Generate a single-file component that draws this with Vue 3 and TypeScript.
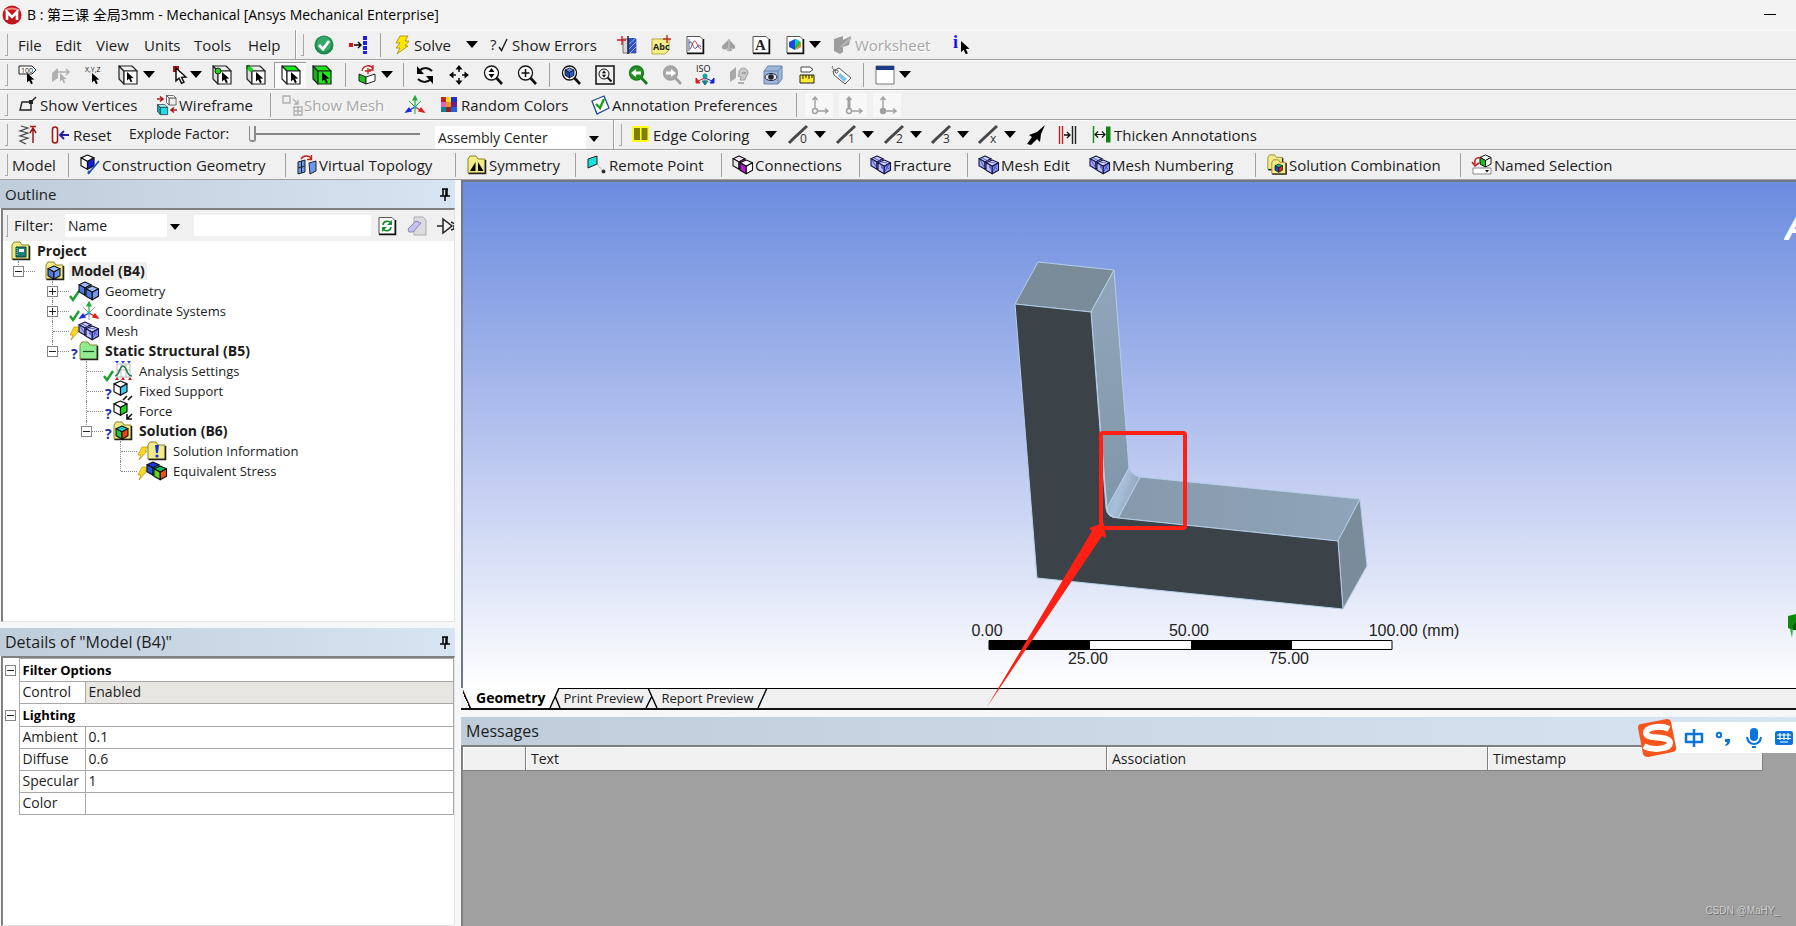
<script setup lang="ts">
import { ref } from 'vue'

interface Item {
  kind?: 'grip' | 'sep' | 'edge' | 'drop' | 'label' | 'slider' | 'select'
  icon?: string
  text?: string
  name?: string
  w: number
  off?: boolean
  on?: boolean
  tile?: boolean
}

interface Node {
  depth: number
  text: string
  icon: string
  bold?: boolean
  box?: '+' | '-'
  status?: 'ok' | 'bolt' | 'ask'
  last?: boolean
  selected?: boolean
}

const grip = (w = 13): Item => ({ kind: 'grip', w })
const sep = (w = 12): Item => ({ kind: 'sep', w })
const drop = (name: string, w = 22): Item => ({ kind: 'drop', name, w })

const sans = 'font-family="Open Sans, sans-serif"'
const box = (f: string, t: string, s: string, c = '#222') =>
  `<g stroke="${c}" stroke-width="1.2" stroke-linejoin="round"><path fill="${s}" d="M1 1v13l5 5V6z"/><path fill="${t}" d="M1 1h13l5 5H6z"/><path fill="${f}" d="M6 6h13v13H6z"/></g>`
const hex = (x: number, y: number, k: number, t: string, l: string, r: string, c = '#111') =>
  `<g transform="translate(${x} ${y}) scale(${k})" stroke="${c}" stroke-width=".9" stroke-linejoin="round"><path fill="${t}" d="M5 0l5 2.2L5 5 0 2.2z"/><path fill="${l}" d="M0 2.2L5 5v6L0 8.2z"/><path fill="${r}" d="M10 2.2L5 5v6l5-2.8z"/></g>`
const cursor = (x: number, y: number, k = 1, f = '#000', s = 'none') =>
  `<path transform="translate(${x} ${y}) scale(${k})" fill="${f}" stroke="${s}" d="M0 0v8.6l2-1.8 1.7 3.4 1.6-.8L3.7 6.2l2.9-.2z"/>`
const folder = (f = '#f3eb86') =>
  `<path d="M1 4l2-3h6l2 3h7v14H1z" fill="${f}" stroke="#8c8430"/><path d="M1.5 18.5h17V5" fill="none" stroke="#222" stroke-width="1.6"/>`
const lens = (inner: string, c = '#111', f = '#fff') =>
  `<circle cx="8.5" cy="8" r="7" fill="${f}" stroke="${c}" stroke-width="1.3"/><path d="M13.5 13l5.5 6" stroke="${c}" stroke-width="2.6"/>${inner}`
const axes = (a: string) =>
  `<g stroke="#a0a0a0" fill="none" stroke-width="1.4"><path d="M6 15V2M3.500 5L6 2l2.500 3M7 16h12M16 13.500l3 2.500-3 2.500"/>${a}</g>`
const mesh =
  hex(0, 1, 1.2, '#c8ccff', '#a4aaf8', '#b4baff', '#14143c') +
  hex(7, 5, 1.25, '#d4d8ff', '#b9bdfa', '#8c94f4', '#14143c') +
  '<path d="M1 5l5 8M3 3l6 3M9 8l4 8M14 11l4 3M10 13l3-2M14 16l4-7M10 7l6 1" stroke="#3c44b8" stroke-width=".8"/>'
const edgeLine = (n: string) =>
  `<path d="M1 18l4-4L19 1" stroke="#484848" stroke-width="3" fill="none"/><text x="12" y="18" font-size="12" fill="#333" ${sans}>${n}</text>`
const triad = (k: string) =>
  `<path d="M10 12V2M8 5l2-4 2 4z" stroke="#18b030" fill="#18b030" stroke-width="1.2"/><path d="M10 12l-7 4M1 17l3-4 2 3z" stroke="#1a2ae0" fill="#1a2ae0" stroke-width="1.3"/><path d="M10 12l7 4M19 17l-5-1 2-3z" stroke="#e02020" fill="#e02020" stroke-width="1.3"/><path d="M4 6l5 5M16 6l-5 5M10 13v6" stroke="${k}"/><circle cx="10" cy="12" r="1.5" fill="#18a8c0"/>`
const page = (f = '#fff') =>
  `<path d="M2 1.500h13l3 3V18H2z" fill="${f}" stroke="#555"/><path d="M2 18.500h16.500V4" fill="none" stroke="#111" stroke-width="1.5"/>`

const icons: Record<string, string> = {
  app: '<circle cx="10" cy="10" r="9.5" fill="#c4141c"/><path d="M3 6a9 7 0 0 1 14 0" fill="none" stroke="#ef8a8a" stroke-width="2"/><path d="M5 15V7l5 5 5-5v8" fill="none" stroke="#fff" stroke-width="2.6"/>',
  check: '<circle cx="10" cy="10" r="9.5" fill="#1d8a4c"/><circle cx="10" cy="9" r="7.5" fill="#36a866"/><path d="M5 10l4 4 6-8" fill="none" stroke="#fff" stroke-width="2.8"/>',
  dots: '<path d="M1 8h4v4H1z" fill="#e01010"/><path d="M6 10h7M10 7l3 3-3 3" stroke="#000" fill="none" stroke-width="1.4"/><path d="M15 1h4v4h-4zM15 6h4v4h-4zM15 11h4v4h-4zM15 16h4v3h-4z" fill="#1a20e8"/>',
  bolt: '<path d="M8 1h8l-3 5h4l-4 5h3L5 19l3-6H4l4-5H4z" fill="#ffe600" stroke="#a08c10" stroke-width=".8"/>',
  errors: `<text x="0" y="15" font-size="15" fill="#222" ${sans}>?</text><path d="M9 12l2.500 3.500L17 4" fill="none" stroke="#222" stroke-width="1.5"/>`,
  section: '<path d="M6 4h13v14H6z" fill="#d7d7df" stroke="#777"/><path d="M11 3h8v15h-8z" fill="#2b50c8"/><path d="M11 10l8-7M11 15l8-8M13 18l6-6" stroke="#9db3f5"/><path d="M11 1v18" stroke="#222" stroke-width="1.5"/><path d="M5 1v9M0 5h9" stroke="#d01818" stroke-width="1.4"/>',
  abc: `<path d="M1 4h17v11l-4 4H1z" fill="#f6ee86" stroke="#b5aa40"/><text x="2" y="15" font-size="9" font-weight="700" fill="#222" ${sans}>Abc</text><path d="M16 0v8M12 4h8" stroke="#c03020" stroke-width="1.4"/>`,
  chart: page() + '<path d="M4 4v12M4 8c3-5 4 8 7 5s2-5 5-1" stroke="#3a50b0" fill="none"/><path d="M5 14c2-2 3-9 5-8s2 6 6 8" stroke="#c02828" fill="none"/>',
  spade: '<path d="M10 4l6 7c1 3-2 4-4 2l1 3H8l1-3c-3 3-7 1-6-2z" fill="#a0a0a0"/><path d="M10 4v13" stroke="#c8c8c8"/>',
  letter: page() + '<text x="4" y="15" font-size="15" font-weight="bold" fill="#222" font-family="Liberation Serif, serif">A</text>',
  figure: page() + '<path d="M4 7l6-3v11l-6-3z" fill="#1848e0"/><path d="M10 4l6 3-2 4-4 4z" fill="#20c040"/><path d="M10 4l4 1-4 6z" fill="#10c8e0"/><path d="M16 7v5l-5 3z" fill="#f08010"/>',
  worksheet: '<path d="M1 4l9-3v4l8-4-2 9-6 2v5l-3 2-6-3z" fill="#9c9c9c"/><path d="M8 12l10-9" stroke="#b8b8b8" stroke-width="2"/>',
  info: '<text x="0" y="13" font-size="18" font-weight="bold" fill="#1414e8" font-family="Liberation Serif, serif">i</text>' + cursor(8, 6, 1.3),
  probe: `<path d="M1 1h13l4 4-4 4H1z" fill="#fff" stroke="#222"/><text x="3" y="8" font-size="7" fill="#111" ${sans}>100</text>` + cursor(9, 8, 1.1),
  plane: '<path d="M1 8l6-5v10l-6 4z" fill="#b0b0b0"/><path d="M7 7h11M15 4l3 3-3 3" stroke="#b0b0b0" fill="none" stroke-width="1.5"/>' + cursor(9, 8, 1, '#b0b0b0'),
  xyz: `<text x="1" y="7" font-size="7" fill="#111" ${sans}>X,Y,Z</text>` + cursor(8, 8, 1.1),
  pick: box('#fff', '#eee', '#ddd') + cursor(9, 7),
  vertex: box('#fff', '#eee', '#ddd') + '<circle cx="6" cy="6" r="3" fill="#18d818" stroke="#222"/>' + cursor(10, 7, 1.1),
  edge: box('#fff', '#eee', '#ddd') + '<path d="M1 1l5 5" stroke="#18d818" stroke-width="4"/><path d="M1 4V1h3" stroke="#222" fill="none"/>' + cursor(10, 7, 1.1),
  face: box('#fff', '#18e818', '#fff') + cursor(10, 7, 1.1),
  body: box('#18e818', '#18e818', '#10b410') + cursor(10, 7, 1.1),
  redpick: '<path d="M1 1h6v6H1z" fill="#b01010"/>' + cursor(4, 3, 1.5, '#fff', '#111'),
  rotbox: '<path d="M2 9l7 3v7l-7-3z" fill="#18c018" stroke="#222"/><path d="M9 12l9-3v7l-9 3z" fill="#fff" stroke="#222"/><path d="M5 6c1-6 9-7 11-2M16 0v5h-4M8 6h6M11 3v6" stroke="#c02020" fill="none" stroke-width="1.3"/>',
  rotate: '<path d="M4 6c4-4 9-4 13 0M16 14c-4 4-9 4-13 0" fill="none" stroke="#111" stroke-width="2.2"/><path d="M2 1v8h7zM18 19v-8h-7z"/>',
  pan: '<path d="M10 2v5M10 13v5M2 10h5M13 10h5" stroke="#111" stroke-width="1.5"/><path d="M10 0l3.500 4.500h-7zM10 20l3.500-4.500h-7zM0 10l4.500-3.500v7zM20 10l-4.500-3.500v7z"/>',
  zoom: lens('<path d="M8.500 3l3 4h-6zM8.500 13l3-4h-6z"/>'),
  zoomin: lens('<path d="M8.500 4v8M4.500 8h8" stroke="#111" stroke-width="1.5"/>'),
  zoomfit: lens(hex(4, 3, 0.9, '#5a90f0', '#1848b0', '#2a5cd0')),
  zoombox: '<path d="M1 1h18v18H1z" fill="none" stroke="#111" stroke-width="1.5"/><circle cx="9" cy="9" r="5" fill="none" stroke="#111"/><path d="M12.500 12.500l4 4" stroke="#111" stroke-width="2"/><path d="M9 5.500l2 2.800H7zM9 12.500l2-2.800H7z"/>',
  prev: lens('<path d="M3 8l5-4v2.500h5v3H8V12z" fill="#fff"/>', '#187818', '#249024'),
  next: lens('<path d="M14 8L9 4v2.500H4v3h5V12z" fill="#fff"/>', '#a0a0a0', '#a8a8a8'),
  iso: `<text x="1" y="7" font-size="9" fill="#111" ${sans}>ISO</text><path d="M10 12v6M10 20l-3-4h6z" fill="#188088" stroke="#188088"/><path d="M10 13l-7 3M1 13v5h4z" fill="#d02020" stroke="#d02020"/><path d="M10 13l7 3M19 13v5h-4z" fill="#1820d0" stroke="#1820d0"/><circle cx="10" cy="11" r="2.5" fill="#18a8a0"/>`,
  look: '<path d="M1 7l6-5v11l-6 4z" fill="#a8a8a8"/><path d="M10 6c2-4 8-4 9 1 0 4-3 5-3 8h-5l1-3-3-1 1-2z" fill="#c8c8c8" stroke="#a0a0a0"/><path d="M13 8h4M9 18h6" stroke="#999" stroke-width="1.5"/>',
  eye: '<path d="M1 6l4-5h14v13l-4 5H1z" fill="#9cb8dc" stroke="#6884a8"/><path d="M1 6h14v13M15 6l4-5" fill="none" stroke="#6884a8"/><ellipse cx="8" cy="12" rx="6" ry="3.5" fill="#e4ecf6" stroke="#223"/><circle cx="8" cy="12" r="2.8" fill="#223"/>',
  ruler: '<path d="M4 2h9l3 2.500L13 7H4z" fill="#fff" stroke="#444"/><path d="M3 10h14v8H3z" fill="#ffe930" stroke="#222"/><path d="M6 10v4M9 10v3M12 10v4M15 10v3" stroke="#222"/>',
  tag: '<path d="M2 6l6-3 12 10-6 6L3 10z" fill="#fff" stroke="#555"/><path d="M9 8l7 6-3 3-6-6z" fill="#7cc0f0"/><circle cx="5.5" cy="6.5" r="1.6" fill="#eee" stroke="#555"/><path d="M5 6C2 4 0 3 2 1" fill="none" stroke="#555"/>',
  window: '<path d="M1 1h18v18H1z" fill="#fff" stroke="#777"/><path d="M1 1h18v4H1z" fill="#1c3c88"/>',
  vertices: '<path d="M4 7h9v8H2z" fill="none" stroke="#222" stroke-width="1.4"/><path d="M13 7l5-5" stroke="#222" stroke-width="1.4"/><path d="M11 5h4v4h-4z" fill="#222"/>',
  wire: '<g transform="translate(9 0) scale(.53)">' + box('#eee', '#fff', '#fff') + '</g><g transform="translate(0 9) scale(.56)">' + box('#18e0e8', '#a0f4f8', '#10b0b8') + '</g><path d="M0 4h5M3 1.500L6 4 3 6.500M20 15h-5M17 12.500L14 15l3 2.500" stroke="#b01818" fill="none" stroke-width="1.6"/>',
  showmesh: '<path d="M1 1h7v7H1zM12 12h8v8h-8zM16 12v8M12 16h8M11 4l5 5M16 5v4h-4" stroke="#b0b0b0" fill="none" stroke-width="1.4"/>',
  triad: triad('#18b030'),
  random: '<path d="M2 2h5v5H2z" fill="#c02020"/><path d="M7 2h5v5H7z" fill="#f8e020"/><path d="M12 2h6v5h-6z" fill="#2030d0"/><path d="M2 7h5v5H2z" fill="#e060c0"/><path d="M7 7h5v5H7z" fill="#f09020"/><path d="M12 7h6v5h-6z" fill="#702080"/><path d="M2 12h5v5H2z" fill="#108090"/><path d="M7 12h5v5H7z" fill="#902020"/><path d="M12 12h6v5h-6z" fill="#2060e0"/>',
  prefs: '<path d="M2 6l12-5 5 12-12 6z" fill="#fff" stroke="#234a90" stroke-width="1.3"/><path d="M6 9l4 4 4-9" fill="none" stroke="#18a018" stroke-width="2.4"/>',
  axisA: axes('<circle cx="6" cy="16" r="2.5" fill="#f4f4f4"/>'),
  axisB: axes('<path d="M6 15V4" stroke-width="3"/><circle cx="6" cy="16" r="2.5" fill="#f4f4f4"/>'),
  axisC: axes('<circle cx="6" cy="16" r="2.5" fill="#a0a0a0"/>'),
  spring: '<path d="M3 1l7 2-8 3 8 2-8 3 8 2-8 3 6 3" fill="none" stroke="#444" stroke-width="1.2"/><path d="M15 18V4M12 8l3-5 3 5M12 1.500h6" fill="none" stroke="#a01818" stroke-width="1.5"/>',
  reset: '<rect x="1.5" y="2" width="5" height="16" rx="2.5" fill="#fff" stroke="#a01818" stroke-width="1.6"/><path d="M18 10H9M13 6l-4 4 4 4" fill="none" stroke="#2020a0" stroke-width="1.8"/>',
  coloring: '<path d="M1 1h17v16H1z" fill="#ffff20"/><path d="M3 3h6v12H3zM10.500 3h6v12h-6z" fill="#808000"/>',
  e0: edgeLine('0'),
  e1: edgeLine('1'),
  e2: edgeLine('2'),
  e3: edgeLine('3'),
  ex: edgeLine('x'),
  pin: '<path d="M1 19l5-7-3-2 8-3 8-7-4 9-1 8-3-3-6 6z"/>',
  gap: '<path d="M1.500 1v18M4.500 1v18" stroke="#c02020" stroke-width="1.4"/><path d="M6 10h6M9 7l3 3-3 3" fill="none" stroke="#111" stroke-width="1.3"/><path d="M14.500 1v18M17.500 1v18" stroke="#222" stroke-width="1.4"/>',
  thick: '<path d="M1.500 1v17" stroke="#189018" stroke-width="1.5"/><path d="M3 9.500h10M6 6.500l-3 3 3 3M10 6.500l3 3-3 3" fill="none" stroke="#111" stroke-width="1.2"/><path d="M14 1.500h4.500v16H14z" fill="#108010"/>',
  construct: hex(1, 0, 1.3, '#fff', '#fff', '#1020e0') + '<path d="M8 19L19 6" stroke="#1a50c0" stroke-width="1.8"/><circle cx="9" cy="17" r="1.5" fill="#1a50c0"/>',
  topo: '<path d="M1 7l7-2v12l-7 2zM12 8l7-2v10l-6 3z" fill="#6c98f0" stroke="#222"/><path d="M4.500 6v12M1 13l7-2" stroke="#222"/><path d="M4 4c2-4 9-4 10 0M14.500 0v4.500H10" fill="none" stroke="#c02020" stroke-width="1.4"/>',
  symmetry: folder() + '<path d="M8.500 7v9H3zM11 7v9h5.500z"/>',
  remote: '<path d="M1 4l9-3v8l-9 4z" fill="#18e0e0" stroke="#222"/><path d="M10 9l5 6" stroke="#777" stroke-dasharray="1 1"/><circle cx="16.5" cy="16.5" r="2" fill="#333"/>',
  connect: hex(0, 1, 1.2, '#f4e4f8', '#e8e8e8', '#c830d8') + hex(7, 5, 1.25, '#fff', '#b020c8', '#fff'),
  mesh,
  combo: '<g transform="translate(0 -1) scale(.85)">' + folder() + '</g><g transform="translate(4 4) scale(.82)">' + folder() + '</g>' + hex(8, 9, 0.75, '#18c080', '#2040d0', '#d03020'),
  named: hex(8, 0, 1.1, '#fff', '#18c018', '#fff') + '<path d="M8 3C4 2 2 5 3 9M0 7l3 4 4-3" fill="none" stroke="#c02020" stroke-width="1.6"/><path d="M1 13h18v6H1z" fill="#fff" stroke="#888"/><path d="M13 15h4l-2 2.500z"/>',
  project: folder() + '<path d="M5 6h10v10H5z" fill="#188078" stroke="#0c4038"/><path d="M8 8h5v3H8z" fill="#fff"/><path d="M6 7v8" stroke="#8fd8d0" stroke-dasharray="1 1"/>',
  model: folder() + hex(3, 5, 1.2, '#a0bcff', '#5078e0', '#6890f0'),
  geometry: hex(0, 1, 1.2, '#a0bcff', '#5078e0', '#7098f4') + hex(7, 5, 1.25, '#a0bcff', '#5078e0', '#7098f4'),
  coords: triad('#999'),
  static: folder('#90ec90') + '<path d="M4 10.500h11" stroke="#205020" stroke-width="1.2"/>',
  analysis: '<path d="M4 3h13v13H4zM4 9h13M8 3v13M13 3v13" fill="none" stroke="#b8b8b8"/><path d="M2 15c5 0 4-10 8-10s3 10 9 10" fill="none" stroke="#207850" stroke-width="1.6"/><path d="M2 0h4L4 2.500zM8 0h4l-2 2.500zM14 0h4l-2 2.500z" fill="#1838d0"/><path d="M2 19l2-3 2 3zM8 19l2-3 2 3zM15 19l2-3 2 3z" fill="#c01818"/>',
  support: hex(1, 0, 1.3, '#fff', '#fff', '#40c8f0') + '<path d="M10 19l4-4M15 19l4-4" stroke="#111" stroke-width="1.6"/>',
  force: hex(1, 0, 1.3, '#fff', '#fff', '#18d818') + '<path d="M19 13l-4 4M14 13v5h5" fill="none" stroke="#111" stroke-width="1.6"/>',
  solution: folder() + hex(3, 5, 1.2, '#20c8c8', '#20c040', '#f04018'),
  solinfo: folder() + '<path d="M8 4h4l-1 8H9z" fill="#1030d8"/><circle cx="10" cy="15" r="1.6" fill="#1030d8"/>',
  stress: hex(0, 1, 1.2, '#1838d8', '#2050e8', '#18c0e0') + hex(7, 5, 1.25, '#18b858', '#60d820', '#f05018'),
  refresh: page() + '<path d="M6 9c0-4 6-5 8-2M14 11c0 4-6 5-8 2" fill="none" stroke="#189030" stroke-width="1.6"/><path d="M15 4v5h-5zM5 16v-5h5z" fill="#189030"/>',
  clear: '<path d="M7 1h9l3 3v15H7z" fill="#dcdce0" stroke="#aaa"/><path d="M1 13L9 5l5 2-8 9H2z" fill="#c4c0f0" stroke="#8884b8"/>',
  expand: '<path d="M0 10h6M6 3v14l9-7zM14 6l6 3M14 14l6-2M17 9v4" fill="none" stroke="#222" stroke-width="1.5"/>',
}

const status: Record<string, string> = {
  ok: '<path d="M1 15l3 4 6-9" fill="none" stroke="#18a028" stroke-width="2.4"/>',
  bolt: '<path d="M5 6h6l-3 4h2l-8 9 2-5H1z" fill="#ffd820" stroke="#b09018" stroke-width=".7"/>',
  ask: `<text x="2" y="18" font-size="14" font-weight="bold" fill="#1830a8" ${sans}>?</text>`,
}

const bars: Item[][] = [
  [
    grip(),
    { text: 'File', w: 37 },
    { text: 'Edit', w: 41 },
    { text: 'View', w: 48 },
    { text: 'Units', w: 50 },
    { text: 'Tools', w: 54 },
    { text: 'Help', w: 47 },
    { kind: 'edge', w: 6 },
    grip(),
    { icon: 'check', name: 'Status', w: 34 },
    { icon: 'dots', name: 'Dependencies', w: 32 },
    sep(),
    { icon: 'bolt', text: 'Solve', w: 74 },
    drop('Solve options', 24),
    { icon: 'errors', text: 'Show Errors', w: 127 },
    { icon: 'section', name: 'Section plane', w: 34 },
    { icon: 'abc', name: 'Annotation', w: 34 },
    { icon: 'chart', name: 'Chart', w: 34 },
    { icon: 'spade', name: 'Comment', w: 32, off: true },
    { icon: 'letter', name: 'Text', w: 34 },
    { icon: 'figure', name: 'Figure', w: 24 },
    drop('Figure options', 24),
    { icon: 'worksheet', text: 'Worksheet', w: 120, off: true },
    { icon: 'info', name: 'Selection information', w: 24 },
  ],
  [
    grip(),
    { icon: 'probe', name: 'Probe', w: 33 },
    { icon: 'plane', name: 'Direction', w: 33, off: true },
    { icon: 'xyz', name: 'Coordinates', w: 34 },
    { icon: 'pick', name: 'Select type', w: 25 },
    drop('Select type options', 29),
    { icon: 'redpick', name: 'Select mode', w: 18 },
    drop('Select mode options'),
    { icon: 'vertex', name: 'Vertex', w: 34 },
    { icon: 'edge', name: 'Edge', w: 28 },
    { icon: 'face', name: 'Face', w: 38, on: true },
    { icon: 'body', name: 'Body', w: 33 },
    sep(),
    { icon: 'rotbox', name: 'Extend', w: 24 },
    drop('Extend options'),
    sep(),
    { icon: 'rotate', name: 'Rotate', w: 34 },
    { icon: 'pan', name: 'Pan', w: 34 },
    { icon: 'zoom', name: 'Zoom', w: 34 },
    { icon: 'zoomin', name: 'Box zoom', w: 32 },
    sep(),
    { icon: 'zoomfit', name: 'Zoom to fit', w: 34 },
    { icon: 'zoombox', name: 'Magnifier', w: 33 },
    { icon: 'prev', name: 'Previous view', w: 34 },
    { icon: 'next', name: 'Next view', w: 33, off: true },
    { icon: 'iso', name: 'Isometric view', w: 34 },
    { icon: 'look', name: 'Look at', w: 34, off: true },
    { icon: 'eye', name: 'Manage views', w: 34 },
    { icon: 'ruler', name: 'Rescale', w: 34 },
    { icon: 'tag', name: 'Tags', w: 32 },
    sep(),
    { icon: 'window', name: 'Viewports', w: 24 },
    drop('Viewport options'),
  ],
  [
    grip(),
    { icon: 'vertices', text: 'Show Vertices', w: 139 },
    { icon: 'wire', text: 'Wireframe', w: 113 },
    sep(),
    { icon: 'showmesh', text: 'Show Mesh', w: 123, off: true },
    { icon: 'triad', name: 'Coordinate systems', w: 34 },
    { icon: 'random', text: 'Random Colors', w: 151 },
    { icon: 'prefs', text: 'Annotation Preferences', w: 206 },
    sep(9),
    { icon: 'axisA', name: 'Axis start', w: 34, tile: true, off: true },
    { icon: 'axisB', name: 'Axis middle', w: 34, tile: true, off: true },
    { icon: 'axisC', name: 'Axis end', w: 34, tile: true, off: true },
  ],
  [
    grip(),
    { icon: 'spring', name: 'Explode', w: 33 },
    { icon: 'reset', text: 'Reset', w: 78 },
    { kind: 'label', text: 'Explode Factor:', w: 120 },
    { kind: 'slider', name: 'Explode Factor', w: 186 },
    { kind: 'select', name: 'Assembly center', w: 178 },
    { kind: 'edge', w: 6 },
    grip(12),
    { icon: 'coloring', text: 'Edge Coloring', w: 134 },
    drop('Edge coloring options', 23),
    { icon: 'e0', name: 'Free edges', w: 26 },
    drop('Free edge options'),
    { icon: 'e1', name: 'Single edges', w: 26 },
    drop('Single edge options'),
    { icon: 'e2', name: 'Double edges', w: 26 },
    drop('Double edge options', 21),
    { icon: 'e3', name: 'Triple edges', w: 26 },
    drop('Triple edge options', 21),
    { icon: 'ex', name: 'Multiple edges', w: 26 },
    drop('Multiple edge options'),
    { icon: 'pin', name: 'Edge direction', w: 32 },
    { icon: 'gap', name: 'Mesh connection', w: 34 },
    { icon: 'thick', text: 'Thicken Annotations', w: 180 },
  ],
  [
    grip(7),
    { text: 'Model', w: 56 },
    sep(),
    { icon: 'construct', text: 'Construction Geometry', w: 205 },
    sep(),
    { icon: 'topo', text: 'Virtual Topology', w: 158 },
    sep(),
    { icon: 'symmetry', text: 'Symmetry', w: 108 },
    sep(),
    { icon: 'remote', text: 'Remote Point', w: 134 },
    sep(),
    { icon: 'connect', text: 'Connections', w: 126 },
    sep(),
    { icon: 'mesh', text: 'Fracture', w: 96 },
    sep(),
    { icon: 'mesh', text: 'Mesh Edit', w: 111 },
    { icon: 'mesh', text: 'Mesh Numbering', w: 165 },
    sep(),
    { icon: 'combo', text: 'Solution Combination', w: 193 },
    sep(),
    { icon: 'named', text: 'Named Selection', w: 160 },
  ],
]

const nodes: Node[] = [
  { depth: 0, text: 'Project', icon: 'project', bold: true },
  { depth: 1, text: 'Model (B4)', icon: 'model', bold: true, box: '-', last: true, selected: true },
  { depth: 2, text: 'Geometry', icon: 'geometry', box: '+', status: 'ok' },
  { depth: 2, text: 'Coordinate Systems', icon: 'coords', box: '+', status: 'ok' },
  { depth: 2, text: 'Mesh', icon: 'mesh', status: 'bolt' },
  { depth: 2, text: 'Static Structural (B5)', icon: 'static', bold: true, box: '-', status: 'ask', last: true },
  { depth: 3, text: 'Analysis Settings', icon: 'analysis', status: 'ok' },
  { depth: 3, text: 'Fixed Support', icon: 'support', status: 'ask' },
  { depth: 3, text: 'Force', icon: 'force', status: 'ask' },
  { depth: 3, text: 'Solution (B6)', icon: 'solution', bold: true, box: '-', status: 'ask', last: true },
  { depth: 4, text: 'Solution Information', icon: 'solinfo', status: 'bolt' },
  { depth: 4, text: 'Equivalent Stress', icon: 'stress', status: 'bolt', last: true },
]

const details = [
  { title: 'Filter Options', rows: [{ k: 'Control', v: 'Enabled', locked: true }] },
  {
    title: 'Lighting',
    rows: [
      { k: 'Ambient', v: '0.1', locked: false },
      { k: 'Diffuse', v: '0.6', locked: false },
      { k: 'Specular', v: '1', locked: false },
      { k: 'Color', v: '', locked: false },
    ],
  },
]

const explode = ref(0)
const center = ref('Assembly Center')
const filterBy = ref('Name')
const filterText = ref('')
</script>

<template>
  <div class="app">
    <header class="title">
      <svg class="icon" viewBox="0 0 20 20" v-html="icons.app"></svg>
      <h1>B : 第三课 全局3mm - Mechanical [Ansys Mechanical Enterprise]</h1>
      <button class="minimize" aria-label="Minimize"></button>
    </header>

    <nav v-for="(bar, b) in bars" :key="b" class="bar">
      <div
        v-for="(it, i) in bar"
        :key="i"
        class="slot"
        :class="it.kind"
        :style="{ width: it.w + 'px' }"
      >
        <button v-if="it.kind === 'drop'" class="tool arrow" :aria-label="it.name">
          <svg width="12" height="7" viewBox="0 0 12 7"><path d="M0 0h12L6 7z" /></svg>
        </button>
        <label v-else-if="it.kind === 'label'" for="explode">{{ it.text }}</label>
        <input
          v-else-if="it.kind === 'slider'"
          id="explode"
          v-model="explode"
          type="range"
          min="0"
          max="10"
        />
        <div v-else-if="it.kind === 'select'" class="combo">
          <select v-model="center" :aria-label="it.name">
            <option>Assembly Center</option>
          </select>
          <svg width="10" height="6" viewBox="0 0 12 7"><path d="M0 0h12L6 7z" /></svg>
        </div>
        <button
          v-else-if="!it.kind"
          class="tool"
          :class="{ on: it.on, tile: it.tile }"
          :disabled="it.off"
          :aria-label="it.name"
        >
          <svg v-if="it.icon" class="icon" viewBox="0 0 20 20" v-html="icons[it.icon]"></svg>
          <span v-if="it.text">{{ it.text }}</span>
        </button>
      </div>
    </nav>

    <main>
      <aside>
        <section class="panel outline">
          <header class="caption">
            <h2>Outline</h2>
            <button class="tack" aria-label="Pin outline">
              <svg width="10" height="13" viewBox="0 0 10 13">
                <path d="M2 1h6M3 1v7M7 1v7M6 1v7M0 8h10M5 8v5" fill="none" stroke="#000" stroke-width="1.5" />
              </svg>
            </button>
          </header>
          <div class="body">
            <div class="filter">
              <label for="by">Filter:</label>
              <div class="combo">
                <select id="by" v-model="filterBy">
                  <option>Name</option>
                </select>
                <svg width="10" height="6" viewBox="0 0 12 7"><path d="M0 0h12L6 7z" /></svg>
              </div>
              <input v-model="filterText" type="text" aria-label="Filter text" />
              <button class="tool" aria-label="Refresh">
                <svg class="icon" viewBox="0 0 20 20" v-html="icons.refresh"></svg>
              </button>
              <button class="tool" aria-label="Clear">
                <svg class="icon" viewBox="0 0 20 20" v-html="icons.clear"></svg>
              </button>
              <button class="tool cut" aria-label="Expand">
                <svg class="icon" viewBox="0 0 20 20" v-html="icons.expand"></svg>
              </button>
            </div>
            <ul class="tree">
              <li v-for="n in nodes" :key="n.text">
                <span
                  v-for="d in n.depth"
                  :key="d"
                  class="guide"
                  :class="{ line: d === n.depth, last: n.last }"
                >
                  <button
                    v-if="d === n.depth && n.box"
                    class="expander"
                    :class="{ plus: n.box === '+' }"
                    :aria-label="n.text"
                  ></button>
                </span>
                <svg class="status" viewBox="0 0 10 20" v-html="n.status ? status[n.status] : ''"></svg>
                <svg class="icon" viewBox="0 0 20 20" v-html="icons[n.icon]"></svg>
                <span class="name" :class="{ bold: n.bold, selected: n.selected }">{{ n.text }}</span>
              </li>
            </ul>
          </div>
        </section>

        <section class="panel details">
          <header class="caption">
            <h2>Details of "Model (B4)"</h2>
            <button class="tack" aria-label="Pin details">
              <svg width="10" height="13" viewBox="0 0 10 13">
                <path d="M2 1h6M3 1v7M7 1v7M6 1v7M0 8h10M5 8v5" fill="none" stroke="#000" stroke-width="1.5" />
              </svg>
            </button>
          </header>
          <div class="body">
            <table class="props">
              <tbody v-for="g in details" :key="g.title">
                <tr class="group">
                  <td class="gutter"><button class="expander" :aria-label="g.title"></button></td>
                  <th colspan="2">{{ g.title }}</th>
                </tr>
                <tr v-for="r in g.rows" :key="r.k">
                  <td class="gutter"></td>
                  <td class="key">{{ r.k }}</td>
                  <td :class="{ locked: r.locked }">{{ r.v }}</td>
                </tr>
              </tbody>
            </table>
          </div>
        </section>
      </aside>

      <div class="work">
        <div class="view">
          <span class="brand">A</span>
          <svg class="scene" width="540" height="470" viewBox="0 0 540 470">
            <defs>
              <linearGradient id="upright" x1="0" y1="0" x2="0" y2="1">
                <stop offset="0" stop-color="#92a6bb" />
                <stop offset="1" stop-color="#8296aa" />
              </linearGradient>
              <linearGradient id="foot" x1="0" y1="0" x2="1" y2="0">
                <stop offset="0" stop-color="#8699ad" />
                <stop offset="1" stop-color="#90a4b9" />
              </linearGradient>
              <linearGradient id="fillet" x1="0" y1="0" x2="1" y2="0.5">
                <stop offset="0" stop-color="#8fa5bc" />
                <stop offset="0.5" stop-color="#a9c0da" />
                <stop offset="1" stop-color="#8ba0b6" />
              </linearGradient>
            </defs>
            <g stroke="#b4cfe9" stroke-width="1" stroke-linejoin="round">
              <path d="M75 64L98 22l76 8-23 42z" fill="#7a8b9a" />
              <path d="M151 72l23-42 15 198-22 40z" fill="url(#upright)" />
              <path d="M178 278l22-41 220 22-22 42z" fill="url(#foot)" />
              <path d="M167 268l22-40q3 7 11 9l-22 41q-10-2-11-10z" fill="url(#fillet)" />
              <path d="M398 301l22-42 7 67-24 43z" fill="#7a8b9a" />
              <path d="M75 64l76 8 15 196q1 10 12 10l220 23 5 68-306-31z" fill="#3b4349" />
            </g>
            <path d="M49 400.500h403v9H49z" fill="#fff" stroke="#000" />
            <path d="M49 400h101v10H49zM251 400h101v10H251z" />
            <g class="ticks">
              <text x="47" y="396">0.00</text>
              <text x="249" y="396">50.00</text>
              <text x="474" y="396">100.00 (mm)</text>
              <text x="148" y="424">25.00</text>
              <text x="349" y="424">75.00</text>
            </g>
            <rect x="161" y="193" width="84" height="95" rx="2" fill="none" stroke="#ff2014" stroke-width="4" />
            <path d="M47 467L152 291l-3-3 15-5 2 15-4-2z" fill="#ff2014" />
          </svg>
          <svg class="axis" width="9" height="26" viewBox="0 0 9 26">
            <path d="M1 2l8-2v16H6L1 14z" fill="#0c8a0c" />
            <path d="M3 15l2 9 1-9z" fill="#20c020" />
            <path d="M6 12l3-4v8H6z" fill="#045004" />
          </svg>
        </div>
        <div class="tabs">
          <button class="tab active">Geometry</button>
          <svg width="14" height="20" viewBox="0 0 14 20">
            <path d="M0 0h11L2 20H0z" fill="#fff" />
            <path d="M2 20L11 0h3M7 8l5 12" fill="none" stroke="#000" stroke-width="1.4" />
          </svg>
          <button class="tab">Print Preview</button>
          <svg width="14" height="20" viewBox="0 0 14 20">
            <path d="M3 0l9 20M1 20l6-12" fill="none" stroke="#000" stroke-width="1.4" />
          </svg>
          <button class="tab">Report Preview</button>
          <svg width="14" height="20" viewBox="0 0 14 20">
            <path d="M2 20L11 0" fill="none" stroke="#000" stroke-width="1.4" />
          </svg>
        </div>
        <section class="messages">
          <header class="caption"><h2>Messages</h2></header>
          <div class="log">
            <table>
              <thead>
                <tr>
                  <th class="c0"></th>
                  <th class="c1">Text</th>
                  <th class="c2">Association</th>
                  <th class="c3">Timestamp</th>
                </tr>
              </thead>
            </table>
          </div>
        </section>
      </div>
    </main>

    <div class="ime">
      <svg width="40" height="40" viewBox="0 0 40 40">
        <path d="M4 6L30 1q3 0 4 3l5 25q1 4-3 5L11 39q-4 0-5-3L1 10q0-4 3-4z" fill="#f8551c" />
        <path d="M32 11C24 7 9 9 9 15c0 7 24 2 24 10 0 6-17 8-26 3" fill="none" stroke="#fff" stroke-width="6" />
      </svg>
      <button aria-label="Chinese mode">
        <svg width="20" height="20" viewBox="0 0 20 20">
          <path d="M2 6h16v8H2zM10 1v18" fill="none" stroke="#0a74dc" stroke-width="2.5" stroke-linejoin="round" />
        </svg>
      </button>
      <button aria-label="Punctuation">
        <svg width="20" height="20" viewBox="0 0 20 20">
          <circle cx="5" cy="7" r="2.2" fill="none" stroke="#0a74dc" stroke-width="2" />
          <path d="M11 11h5q1 5-4 7l-1-1q2-1 2-3h-2z" fill="#0a74dc" />
        </svg>
      </button>
      <button aria-label="Voice">
        <svg width="20" height="20" viewBox="0 0 20 20">
          <rect x="6" y="0" width="8" height="13" rx="4" fill="#0a74dc" />
          <path d="M3 9q1 7 7 7t7-7M8 19h4" fill="none" stroke="#0a74dc" stroke-width="2" />
        </svg>
      </button>
      <button aria-label="Keyboard">
        <svg width="20" height="20" viewBox="0 0 20 20">
          <rect x="1" y="3" width="18" height="14" rx="2" fill="#0a74dc" />
          <path d="M3 7h14M3 10.500h14M6 5v7M10 5v7M14 5v7M6 14h8" stroke="#fff" stroke-width="1.2" />
        </svg>
      </button>
    </div>
    <p class="mark">CSDN @MaHY_</p>
  </div>
</template>

<style>
body {
  margin: 0;
}
</style>

<style scoped>
.app {
  position: relative;
  display: flex;
  flex-direction: column;
  min-height: 100vh;
  overflow: hidden;
  background: #f6f7f8;
  color: #1c1c1c;
  font: 15px/20px 'Open Sans', 'Noto Sans CJK SC', sans-serif;
}
.app,
.app *,
.app *::before,
.app *::after {
  box-sizing: border-box;
}
button,
select,
input {
  margin: 0;
  padding: 0;
  border: 0;
  border-radius: 0;
  background: none;
  color: inherit;
  font: inherit;
}
h1,
h2 {
  margin: 0;
  font-weight: 400;
}
.icon {
  flex: none;
  width: 20px;
  height: 20px;
  overflow: visible;
}
.title {
  display: flex;
  align-items: center;
  gap: 5px;
  height: 30px;
  padding: 0 20px 1px 2px;
  background: #f3f3f3;
}
.title h1 {
  flex: 1;
  font-size: 14px;
  color: #000;
}
.minimize {
  width: 12px;
  height: 12px;
  border-bottom: 1px solid #000;
  margin-bottom: 12px;
}
.bar {
  display: flex;
  height: 30px;
  padding-left: 5px;
  background: #f0f0f0;
  border-bottom: 1px solid #a0a0a0;
  box-shadow: inset 0 1px #fafafa;
}
.slot {
  flex: none;
  display: flex;
  align-items: center;
  white-space: nowrap;
}
.grip::before {
  content: '';
  width: 3px;
  height: 22px;
  border: solid #a8a8a8;
  border-width: 0 1px 1px 0;
}
.edge {
  border-left: 1px solid #a0a0a0;
  box-shadow: inset 1px 0 #fff;
}
.sep::before {
  content: '';
  width: 1px;
  height: 24px;
  background: #a0a0a0;
}
.tool {
  display: flex;
  align-items: center;
  gap: 2px;
  height: 28px;
}
.tool span {
  padding-top: 1px;
}
.tool:disabled {
  color: #a6a6a6;
  text-shadow: 1px 1px #fff;
}
.tool.arrow {
  height: 20px;
}
.tool.on {
  width: 32px;
  height: 26px;
  padding-left: 6px;
  background: #fafafa;
  border: solid #9a9a9a;
  border-width: 1px 0 0 1px;
}
.tool.tile {
  width: 28px;
  height: 24px;
  justify-content: center;
  background: #f7f7f7;
}
.label label {
  font-size: 14px;
  padding-bottom: 2px;
}
.combo {
  position: relative;
  height: 23px;
  background: #fff;
}
.combo select {
  appearance: none;
  width: 100%;
  height: 100%;
  padding: 1px 20px 0 3px;
  font-size: 14px;
}
.combo svg {
  position: absolute;
  right: 4px;
  top: 10px;
  z-index: 1;
}
.combo::after {
  content: '';
  position: absolute;
  inset: 0 0 0 auto;
  width: 17px;
  background: #f0f0f0;
}
.select .combo {
  width: 168px;
  align-self: flex-end;
}
#explode {
  appearance: none;
  width: 171px;
  height: 20px;
  background: linear-gradient(#868686, #868686) center / 100% 2px no-repeat;
  margin-bottom: 2px;
}
#explode::-webkit-slider-thumb {
  appearance: none;
  width: 7px;
  height: 16px;
  background: #f0f0f0;
  border: solid #8a8a8a;
  border-width: 0 2px 2px 1px;
  border-radius: 0 0 3px 3px;
}
main {
  flex: 1;
  display: grid;
  grid-template-columns: 455px minmax(0, 1fr);
  gap: 6px;
}
aside {
  display: flex;
  flex-direction: column;
  gap: 6px;
}
.panel {
  display: flex;
  flex-direction: column;
}
.outline {
  flex: 1;
}
.details {
  height: 298px;
}
.caption {
  display: flex;
  align-items: center;
  justify-content: space-between;
  height: 28px;
  padding: 0 5px;
  background: linear-gradient(90deg, #bfcddb, #d7e4f2);
}
.caption h2 {
  font-size: 16px;
}
.outline h2 {
  font-size: 15px;
}
.tack {
  display: flex;
}
.body {
  flex: 1;
  margin-left: 1px;
  background: #fff;
  border: solid #808080;
  border-width: 2px 1px 1px 2px;
  border-right-color: #e4e4e4;
  border-bottom-color: #e4e4e4;
}
.filter {
  display: flex;
  align-items: center;
  height: 31px;
  padding-left: 3px;
  background: #f0f0f0;
  overflow: hidden;
}
.filter::before {
  content: '';
  flex: none;
  width: 2px;
  height: 22px;
  border: solid #a8a8a8;
  border-width: 0 1px 1px 0;
}
.filter label {
  width: 57px;
  padding: 0 0 2px 6px;
}
.filter .combo {
  width: 119px;
  margin-right: 10px;
}
.filter input {
  flex: 1;
  min-width: 0;
  height: 21px;
  margin-right: 6px;
  background: #fff;
}
.filter .tool {
  width: 30px;
}
.filter .cut {
  width: 17px;
}
.tree {
  margin: 0;
  padding: 0;
  list-style: none;
  font-size: 13px;
}
.tree li {
  display: flex;
  align-items: center;
  height: 20px;
  margin-left: -2px;
}
.guide {
  position: relative;
  flex: none;
  width: 34px;
  height: 20px;
}
.guide.line::before {
  content: '';
  position: absolute;
  left: 17px;
  top: 0;
  height: 20px;
  border-left: 1px dotted #888;
}
.guide.line.last::before {
  height: 10px;
}
.guide.line::after {
  content: '';
  position: absolute;
  left: 18px;
  top: 10px;
  width: 16px;
  border-top: 1px dotted #888;
}
.expander {
  position: relative;
  z-index: 1;
  display: block;
  width: 11px;
  height: 11px;
  background: linear-gradient(#222, #222) center / 7px 1px no-repeat #fff;
  border: 1px solid #848484;
}
.guide .expander {
  position: absolute;
  left: 12px;
  top: 5px;
}
.expander.plus {
  background:
    linear-gradient(#222, #222) center / 7px 1px no-repeat,
    linear-gradient(#222, #222) center / 1px 7px no-repeat,
    #fff;
}
.status {
  flex: none;
  width: 10px;
  height: 20px;
  overflow: visible;
}
.name {
  margin-left: 4px;
  padding: 0 2px;
  line-height: 18px;
  white-space: nowrap;
}
.bold {
  font-size: 14px;
  font-weight: 700;
}
.selected {
  background: #f0f0f0;
}
.props {
  width: 100%;
  border-collapse: collapse;
  font-size: 14px;
  line-height: 18px;
}
.props th,
.props td {
  height: 22px;
  padding: 0 3px 1px;
  border: 1px solid #a8a8a8;
  text-align: left;
}
.props .group th {
  height: 23px;
  color: #000;
  font-size: 13px;
}
.props .gutter {
  width: 16px;
  padding: 0 2px;
  border: 0;
}
.props .key {
  width: 66px;
}
.props .locked {
  background: #e8e6e2;
}
.work {
  display: flex;
  flex-direction: column;
  min-width: 0;
}
.view {
  position: relative;
  flex: 1;
  border: solid #707888;
  border-width: 2px 0 0 2px;
  background: linear-gradient(#6b8cdf, #b4c2ee 50%, #fff);
}
.scene {
  position: absolute;
  left: 477px;
  top: 58px;
  z-index: 1;
  overflow: visible;
}
.ticks {
  font: 16px 'Liberation Sans', sans-serif;
  fill: #222;
  text-anchor: middle;
}
.brand {
  position: absolute;
  right: 0;
  top: 26px;
  width: 12px;
  overflow: hidden;
  font: italic 700 37px/40px 'Liberation Sans', sans-serif;
  color: #fff;
}
.axis {
  position: absolute;
  right: 0;
  bottom: 48px;
}
.tabs {
  display: flex;
  height: 22px;
  padding-left: 2px;
  background:
    linear-gradient(#000, #000) 96px 0 / 100% 1px no-repeat,
    #f0f0f0;
  border-bottom: 2px solid #111;
  font-size: 13px;
}
.tab {
  padding: 0 2px;
  white-space: nowrap;
}
.tab.active {
  padding-left: 13px;
  background: linear-gradient(66deg, #f0f0f0 6px, #111 6px, #111 7px, #fff 8px);
  color: #000;
  font-size: 14px;
  font-weight: 700;
}
.messages {
  height: 216px;
  padding-top: 7px;
  display: flex;
  flex-direction: column;
}
.log {
  flex: 1;
  background: #a0a0a0;
  border: solid #808080;
  border-width: 2px 0 0 2px;
}
.log table {
  width: calc(100% - 33px);
  table-layout: fixed;
  border-collapse: separate;
  border-spacing: 0;
  font-size: 14px;
}
.log th {
  height: 24px;
  padding: 0 5px;
  background: #f0f0f0;
  border: solid #808080;
  border-width: 0 1px 1px 0;
  box-shadow: inset 1px 1px #fff;
  font-weight: 400;
  line-height: 20px;
  text-align: left;
}
.c0 {
  width: 63px;
}
.c2 {
  width: 381px;
}
.c3 {
  width: 275px;
}
.ime {
  position: absolute;
  right: 0;
  bottom: 173px;
  z-index: 2;
  display: flex;
  align-items: center;
  gap: 10px;
  height: 31px;
  padding-right: 2px;
  background: linear-gradient(#fff, #fff) right / 138px 100% no-repeat;
}
.ime button {
  display: flex;
  width: 20px;
}
.ime svg {
  flex: none;
}
.ime > svg {
  margin-right: -3px;
}
.mark {
  position: absolute;
  right: 16px;
  bottom: 7px;
  margin: 0;
  color: #cfcfcf;
  text-shadow: 1px 1px #6c6c6c;
  font: 10px/16px 'Liberation Sans', sans-serif;
}
</style>
